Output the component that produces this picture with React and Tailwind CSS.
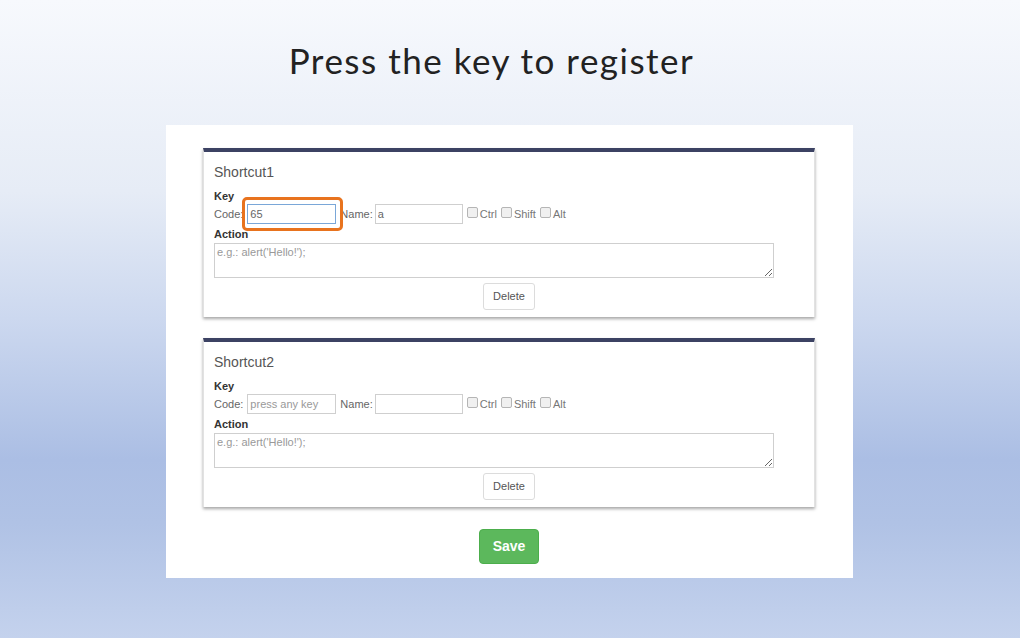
import React from "react";

function Checkbox({ label }) {
  return (
    <span className="inline-flex items-center ml-[4px]">
      <span className="inline-block w-[11px] h-[11px] rounded-[2px] border border-[#b5b5b5] bg-[#f0f0f0] -mt-[3px]" />
      <span className="ml-[2px] text-[#777]">{label}</span>
    </span>
  );
}

function Card({ title, code, codePlaceholder, name, highlight }) {
  return (
    <div className="bg-white border-t-[4px] border-t-[#3c4263] border-x border-x-[#e2e2e2] shadow-[0_2px_3px_rgba(0,0,0,0.35)] px-[10px] pt-[10px] pb-[7px]">
      <div className="text-[14px] leading-[20px] text-[#555]">{title}</div>
      <div className="mt-[7px] text-[11px] leading-[14px] font-bold text-[#333]">Key</div>
      <div className="flex items-center h-[20px] mt-[1px] text-[11px] text-[#666]">
        <span>Code:</span>
        <span className="relative ml-[4px]">
          {highlight && (
            <span className="absolute left-[-5px] right-[-7px] top-[-7px] bottom-[-7px] border-[3px] border-[#e8731e] rounded-[5px] pointer-events-none z-10" />
          )}
          <input
            readOnly
            value={code}
            placeholder={codePlaceholder}
            className={
              "block w-[89px] h-[20px] px-[2px] text-[11px] text-[#666] placeholder:text-[#999] outline-none bg-white border " +
              (highlight ? "border-[#7aa7d8]" : "border-[#cfcfcf]")
            }
          />
        </span>
        <span className="ml-[4px]">Name:</span>
        <input
          readOnly
          value={name}
          className="ml-[2px] block w-[88px] h-[20px] px-[2px] text-[11px] text-[#666] outline-none bg-white border border-[#cfcfcf]"
        />
        <Checkbox label="Ctrl" />
        <Checkbox label="Shift" />
        <Checkbox label="Alt" />
      </div>
      <div className="mt-[3px] text-[11px] leading-[14px] font-bold text-[#333]">Action</div>
      <textarea
        readOnly
        placeholder="e.g.: alert('Hello!');"
        className="block mt-[2px] w-[560px] h-[35px] px-[2px] py-[1px] text-[11px] leading-[14px] text-[#666] placeholder:text-[#999] border border-[#cfcfcf] outline-none bg-white"
      />
      <div className="flex justify-center mt-[5px]">
        <button className="w-[52px] h-[27px] text-[11px] text-[#555] bg-white border border-[#dcdcdc] rounded-[3px]">
          Delete
        </button>
      </div>
    </div>
  );
}

export default function App() {
  return (
    <div
      className="w-[1020px] h-[638px] overflow-hidden bg-[linear-gradient(to_bottom,#f7f9fd_0%,#e6ecf6_30%,#ccd8ef_50%,#abbee4_72%,#b0c2e5_82%,#c4d2ed_100%)]"
      style={{ fontFamily: '"Liberation Sans", Arial, sans-serif' }}
    >
      <div className="h-[125px] flex justify-center pr-[37px] pt-[38px]">
        <h1
          className="text-[35px] leading-[44px] text-[#222] tracking-[1.5px]"
          style={{ fontFamily: 'Lato, "Noto Sans", sans-serif' }}
        >
          Press the key to register
        </h1>
      </div>
      <div className="ml-[166px] w-[687px] bg-white pt-[23px] pb-[14px] pl-[37px] pr-[38px]">
        <Card title="Shortcut1" code="65" name="a" highlight />
        <div className="h-[21px]" />
        <Card title="Shortcut2" code="" codePlaceholder="press any key" name="" />
        <div className="flex justify-center mt-[22px]">
          <button className="w-[60px] h-[35px] rounded-[4px] bg-[#5cb85c] border border-[#4cae4c] text-white text-[14px] font-bold">
            Save
          </button>
        </div>
      </div>
    </div>
  );
}
